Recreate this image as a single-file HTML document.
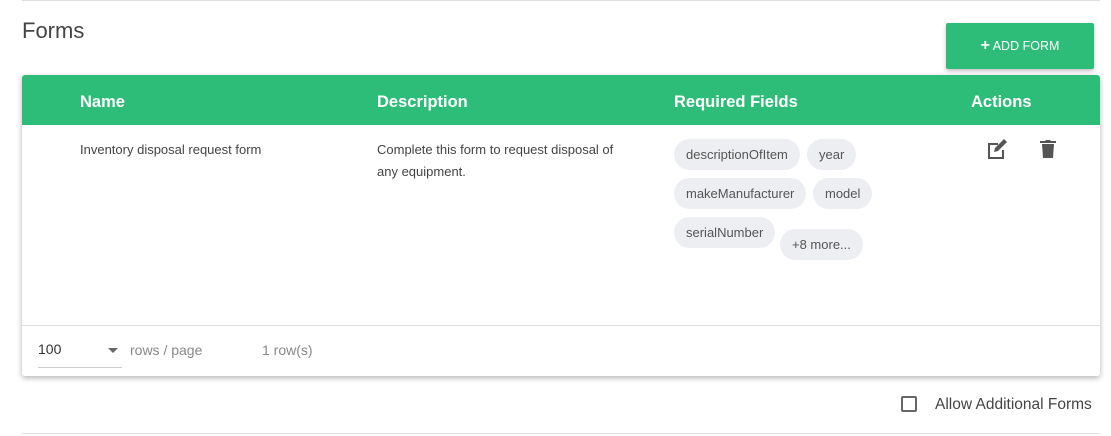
<!DOCTYPE html>
<html><head><style>
*{box-sizing:border-box;margin:0;padding:0}
body{width:1111px;height:436px;background:#fff;font-family:"Liberation Sans",sans-serif;position:relative;overflow:hidden;color:#333}
.abs{position:absolute}
.line{position:absolute;left:22px;width:1078px;height:1px;background:#e0e0e0}
.card{position:absolute;left:22px;top:75px;width:1078px;height:301px;background:#fff;border-radius:3px;box-shadow:0 2px 6px rgba(0,0,0,.3);overflow:hidden}
.hdr{position:absolute;left:0;top:0;width:100%;height:50px;background:#2ebd78}
.hdr span{position:absolute;top:18px;color:#fff;font-size:16.5px;font-weight:bold}
.chip{position:absolute;height:31px;border-radius:16px;background:#eceef1;color:#555;font-size:13px;line-height:31px;padding:0 12px}
.t{font-size:13px;color:#444}
</style></head><body>
<div class="line" style="top:0"></div>
<div class="abs" style="left:22px;top:18px;font-size:22px;color:#444">Forms</div>
<div class="abs" style="left:946px;top:23px;width:148px;height:46px;background:#2ebd78;border-radius:2px;box-shadow:0 2px 4px rgba(0,0,0,.25);color:#fff;font-size:12.5px;line-height:46px;text-align:center"><b style="font-size:16px">+</b> ADD FORM</div>
<div class="card">
 <div class="hdr">
  <span style="left:58px">Name</span>
  <span style="left:355px">Description</span>
  <span style="left:652px">Required Fields</span>
  <span style="left:949px">Actions</span>
 </div>
 <div class="abs t" style="left:58px;top:67px">Inventory disposal request form</div>
 <div class="abs t" style="left:355px;top:64px;line-height:22px;width:255px">Complete this form to request disposal of any equipment.</div>
 <div class="chip" style="left:652px;top:64px">descriptionOfItem</div>
 <div class="chip" style="left:785px;top:64px">year</div>
 <div class="chip" style="left:652px;top:103px">makeManufacturer</div>
 <div class="chip" style="left:791px;top:103px">model</div>
 <div class="chip" style="left:652px;top:142px">serialNumber</div>
 <div class="chip" style="left:758px;top:154px">+8 more...</div>
 <svg class="abs" style="left:964px;top:64px" width="24" height="22" viewBox="0 0 24 22"><path d="M2 4h10v2H4v12h12v-7h2v9H2z" fill="#555"/><path d="M8 13l1-4 9-9 3 3-9 9z" fill="#555"/></svg>
 <svg class="abs" style="left:1017px;top:64px" width="18" height="20" viewBox="0 0 18 20"><path d="M1 2h5l1-1h4l1 1h5v2H1z M3 5h12l-1 14H4z" fill="#555"/></svg>
 <div class="abs" style="left:0;top:250px;width:100%;height:1px;background:#e0e0e0"></div>
 <div class="abs t" style="left:16px;top:266px;font-size:14px;color:#333">100</div>
 <div class="abs" style="left:86px;top:273px;border-left:5px solid transparent;border-right:5px solid transparent;border-top:5px solid #666"></div>
 <div class="abs" style="left:16px;top:292px;width:84px;height:1px;background:#ccc"></div>
 <div class="abs" style="left:108px;top:267px;font-size:14px;color:#888">rows / page</div>
 <div class="abs" style="left:240px;top:267px;font-size:14px;color:#888">1 row(s)</div>
</div>
<div class="abs" style="left:901px;top:396px;width:16px;height:16px;border:2px solid #666;border-radius:2px"></div>
<div class="abs" style="left:935px;top:396px;font-size:15.5px;color:#444">Allow Additional Forms</div>
<div class="line" style="top:433px"></div>
</body></html>
